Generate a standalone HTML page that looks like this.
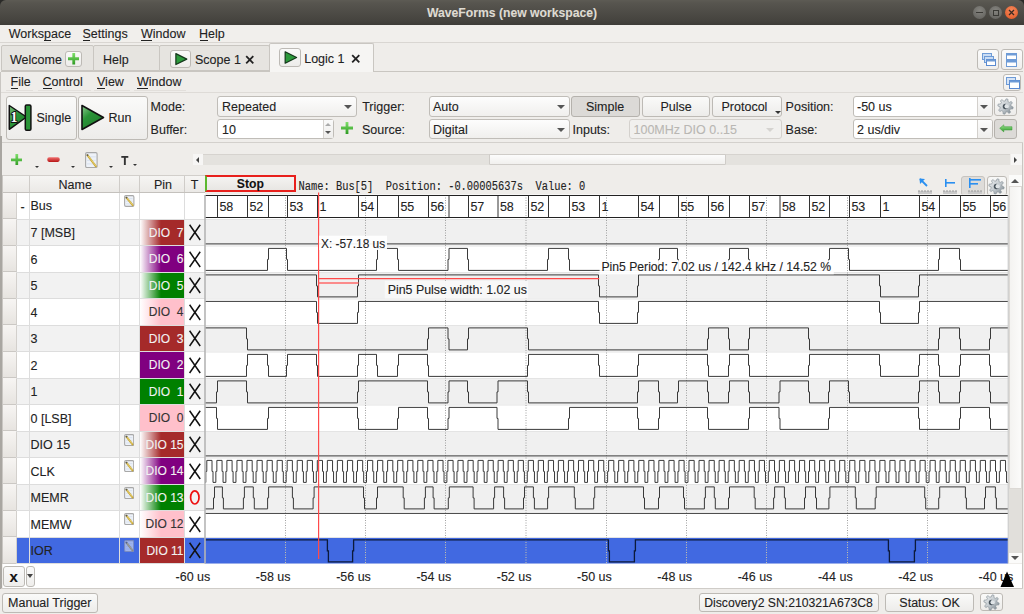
<!DOCTYPE html>
<html><head><meta charset="utf-8">
<style>
*{box-sizing:border-box;margin:0;padding:0}
html,body{width:1024px;height:614px;overflow:hidden;background:#efedea;font-family:"Liberation Sans",sans-serif;font-size:12.5px;color:#222}
.a{position:absolute}
.t{position:absolute;white-space:nowrap;line-height:1;-webkit-text-stroke:0.1px currentColor}
.wb{position:absolute;top:6px;width:13px;height:13px;border-radius:50%}
.btn{position:absolute;border:1px solid #bdbab5;border-radius:3px;background:linear-gradient(#fafaf9,#edecea)}
.prs{position:absolute;border:1px solid #b5b2ad;border-radius:3px;background:#dcdad7}
.combo{position:absolute;border:1px solid #c0bdb8;border-radius:3px;background:linear-gradient(#fdfdfd,#f0efed)}
.edit{position:absolute;border:1px solid #c0bdb8;border-radius:3px;background:#fff}
.arr{position:absolute;width:0;height:0;border-left:4px solid transparent;border-right:4px solid transparent;border-top:4px solid #555}
.u{position:absolute;height:1px;background:#222}
.mono{font-family:"Liberation Mono",monospace}
</style></head><body>

<div class="a" style="left:0;top:0;width:1024px;height:10px;background:#2a2a28"></div>
<div class="a" style="left:0;top:0;width:1024px;height:25px;background:linear-gradient(#5d5b54 0px,#57554f 3px,#46443f 20px,#3e3c38 25px);border-radius:6px 6px 0 0"></div>
<div class="t" style="left:0;width:1024px;text-align:center;top:7px;color:#dfdbd2;font-weight:bold;font-size:12.2px">WaveForms (new workspace)</div>
<div class="wb" style="left:973px;background:radial-gradient(circle at 50% 35%,#85847f,#5f5e5a)"><div class="a" style="left:3px;top:6px;width:7px;height:1px;background:#3a3935"></div></div>
<div class="wb" style="left:989px;background:radial-gradient(circle at 50% 35%,#85847f,#5f5e5a)"><div class="a" style="left:3.5px;top:3.5px;width:6px;height:6px;border:1px solid #3a3935"></div></div>
<div class="wb" style="left:1005px;background:radial-gradient(circle at 50% 35%,#f58a5e,#df5420)"><svg class="a" style="left:0;top:0" width="13" height="13"><path d="M4,4 L9,9 M9,4 L4,9" stroke="#3d2b22" stroke-width="1.3"/></svg></div>
<div class="a" style="left:0;top:25px;width:1024px;height:18px;background:#f1efec;border-bottom:1px solid #d9d6d2"></div>
<div class="t" style="left:8.8px;top:28.2px;">Workspace</div>
<div class="u" style="left:44.0px;top:40.1px;width:7px"></div>
<div class="t" style="left:82.5px;top:28.2px;">Settings</div>
<div class="u" style="left:82.5px;top:40.1px;width:7.5px"></div>
<div class="t" style="left:141px;top:28.2px;">Window</div>
<div class="u" style="left:141px;top:40.1px;width:11px"></div>
<div class="t" style="left:199px;top:28.2px;">Help</div>
<div class="u" style="left:199.5px;top:40.1px;width:8px"></div>
<div class="a" style="left:0;top:43px;width:1024px;height:29px;background:#efedea"></div>
<div class="a" style="left:1px;top:71px;width:1022px;height:1px;background:#c9c6c1"></div>
<div class="a" style="left:1px;top:44.8px;width:93px;height:26.200000000000003px;background:#e6e4e0;border:1px solid #c9c6c1;border-bottom:1px solid #c9c6c1;border-radius:2px 2px 0 0"></div>
<div class="a" style="left:93px;top:44.8px;width:67px;height:26.200000000000003px;background:#e6e4e0;border:1px solid #c9c6c1;border-bottom:1px solid #c9c6c1;border-radius:2px 2px 0 0"></div>
<div class="a" style="left:159px;top:44.8px;width:111px;height:26.200000000000003px;background:#e6e4e0;border:1px solid #c9c6c1;border-bottom:1px solid #c9c6c1;border-radius:2px 2px 0 0"></div>
<div class="a" style="left:269px;top:43px;width:105px;height:29px;background:#f6f5f3;border:1px solid #c9c6c1;border-bottom:none;border-radius:2px 2px 0 0"></div>
<div class="a" style="left:270px;top:71px;width:103px;height:2px;background:#f6f5f3"></div>
<div class="t" style="left:10px;top:53.6px;">Welcome</div>
<div class="btn" style="left:65px;top:50.5px;width:16.5px;height:16.5px"></div>
<svg class="a" style="left:67.5px;top:53px" width="11.5" height="11.5"><defs><linearGradient id="pg67" x1="0" y1="0" x2="0" y2="1"><stop offset="0" stop-color="#7fe06a"/><stop offset="1" stop-color="#2e9a22"/></linearGradient></defs><path d="M4.35,0 h2.8 v4.35 h4.35 v2.8 h-4.35 v4.35 h-2.8 v-4.35 h-4.35 v-2.8 h4.35 z" fill="url(#pg67)"/></svg>
<div class="t" style="left:103px;top:53.6px;">Help</div>
<div class="btn" style="left:169.5px;top:49.8px;width:21px;height:18.2px"></div>
<svg class="a" style="left:169.5px;top:49.8px" width="21" height="18.2"><polygon points="5.880000000000001,3.64 5.880000000000001,14.56 16.8,9.1" fill="#2c9a3c" stroke="#13361a" stroke-width="1.2" stroke-linejoin="round"/></svg>
<div class="t" style="left:195px;top:54px;">Scope 1</div>
<svg class="a" style="left:245px;top:55px" width="9.5" height="9.5"><path d="M1.2,1.2 L8.3,8.3 M8.3,1.2 L1.2,8.3" stroke="#222" stroke-width="1.8" stroke-linecap="butt"/></svg>
<div class="btn" style="left:278.6px;top:48.3px;width:22px;height:19px"></div>
<svg class="a" style="left:278.6px;top:48.3px" width="22" height="19"><polygon points="6.16,3.8000000000000003 6.16,15.200000000000001 17.6,9.5" fill="#2c9a3c" stroke="#13361a" stroke-width="1.2" stroke-linejoin="round"/></svg>
<div class="t" style="left:304.2px;top:53.4px;">Logic 1</div>
<svg class="a" style="left:350.5px;top:54px" width="9.5" height="9.5"><path d="M1.2,1.2 L8.3,8.3 M8.3,1.2 L1.2,8.3" stroke="#222" stroke-width="1.8" stroke-linecap="butt"/></svg>
<div class="btn" style="left:976.6px;top:48.5px;width:22.4px;height:21.5px;background:linear-gradient(#fbfbfb,#f0efed)"></div>
<svg class="a" style="left:976.6px;top:48.5px" width="22.4" height="21.5"><rect x="5.5" y="4.5" width="9" height="6" fill="#c9dcf4" stroke="#6e9bd6"/><rect x="7.5" y="7.5" width="9" height="6" fill="#c9dcf4" stroke="#6e9bd6"/><rect x="9.5" y="10.5" width="9" height="6" fill="#fff" stroke="#5a8ad0"/><rect x="9.5" y="10.5" width="9" height="2" fill="#6e9bd6"/></svg>
<div class="btn" style="left:1001px;top:48.5px;width:21.7px;height:21.5px;background:linear-gradient(#fbfbfb,#f0efed)"></div>
<svg class="a" style="left:1001px;top:48.5px" width="21.7" height="21.5"><rect x="5.5" y="4.5" width="10" height="6" fill="#fff" stroke="#6e9bd6"/><rect x="5.5" y="4.5" width="10" height="2" fill="#6e9bd6"/><rect x="5.5" y="11.5" width="10" height="6" fill="#fff" stroke="#6e9bd6"/><rect x="5.5" y="11.5" width="10" height="2" fill="#6e9bd6"/></svg>
<div class="a" style="left:1px;top:72px;width:1022px;height:20px;background:#efedea"></div>
<div class="t" style="left:10.5px;top:76.4px;">File</div>
<div class="u" style="left:10.5px;top:88.30000000000001px;width:7.5px"></div>
<div class="t" style="left:42.5px;top:76.4px;">Control</div>
<div class="u" style="left:42.5px;top:88.30000000000001px;width:9px"></div>
<div class="t" style="left:97px;top:76.4px;">View</div>
<div class="u" style="left:97px;top:88.30000000000001px;width:8px"></div>
<div class="t" style="left:137px;top:76.4px;">Window</div>
<div class="u" style="left:137px;top:88.30000000000001px;width:11px"></div>
<div class="a" style="left:6px;top:90px;width:27px;height:1px;background:#e2dfdb"></div>
<div class="a" style="left:38px;top:90px;width:53px;height:1px;background:#e2dfdb"></div>
<div class="a" style="left:94px;top:90px;width:36px;height:1px;background:#e2dfdb"></div>
<div class="a" style="left:134px;top:90px;width:52px;height:1px;background:#e2dfdb"></div>
<div class="btn" style="left:1002.7px;top:73.6px;width:18.7px;height:17.3px;background:linear-gradient(#fbfbfb,#f0efed)"></div>
<svg class="a" style="left:1002.7px;top:73.6px" width="18.7" height="17.3"><rect x="3.5" y="3.5" width="9" height="7" fill="#d6e4f6" stroke="#6e9bd6"/><rect x="6.5" y="6.5" width="10" height="8" fill="#fff" stroke="#5a8ad0"/><rect x="6.5" y="6.5" width="10" height="2" fill="#6e9bd6"/></svg>
<div class="a" style="left:1px;top:91.5px;width:1022px;height:1px;background:#dedbd7"></div>
<div class="btn" style="left:6px;top:96px;width:71px;height:43.5px"></div>
<svg class="a" style="left:0;top:90px" width="40" height="50"><defs><linearGradient id="sg" x1="0" y1="0" x2="1" y2="1"><stop offset="0" stop-color="#7cc07f"/><stop offset="0.45" stop-color="#2a9438"/><stop offset="1" stop-color="#1f7a2c"/></linearGradient></defs><polygon points="9.3,15.5 9.3,39.3 26.5,27" fill="url(#sg)" stroke="#111" stroke-width="1.5" stroke-linejoin="round"/><rect x="25.3" y="15" width="5.6" height="25.3" rx="1.3" fill="#2a9438" stroke="#111" stroke-width="1.5"/><text x="10.6" y="32.3" font-family="Liberation Serif" font-weight="bold" font-size="14" fill="#fff" stroke="#111" stroke-width="1.8" paint-order="stroke">1</text></svg>
<div class="t" style="left:36.5px;top:111.5px;">Single</div>
<div class="btn" style="left:78px;top:96px;width:70px;height:43.5px"></div>
<svg class="a" style="left:80px;top:104px" width="26" height="28"><defs><linearGradient id="rg" x1="0" y1="0" x2="0.8" y2="1"><stop offset="0" stop-color="#8ccc8e"/><stop offset="0.4" stop-color="#2a9438"/><stop offset="1" stop-color="#1f7a2c"/></linearGradient></defs><polygon points="2,1.5 2,25.5 23.5,13.5" fill="url(#rg)" stroke="#111" stroke-width="1.6" stroke-linejoin="round"/></svg>
<div class="t" style="left:108.5px;top:111.5px;">Run</div>
<div class="t" style="left:150.6px;top:100.5px;">Mode:</div>
<div class="t" style="left:150.6px;top:124px;">Buffer:</div>
<div class="combo" style="left:217px;top:96px;width:139.5px;height:21px"></div>
<div class="t" style="left:222px;top:100.5px;">Repeated</div>
<div class="arr" style="left:344px;top:104.5px"></div>
<div class="edit" style="left:217px;top:119px;width:116.5px;height:20px"></div>
<div class="a" style="left:322.5px;top:120px;width:10px;height:18px;border-left:1px solid #d6d3cf;background:linear-gradient(#fafafa,#eeedeb)"></div>
<div class="a" style="left:325px;top:123px;width:0;height:0;border-left:3px solid transparent;border-right:3px solid transparent;border-bottom:3.5px solid #aaa"></div>
<div class="a" style="left:325px;top:130.5px;width:0;height:0;border-left:3px solid transparent;border-right:3px solid transparent;border-top:3.5px solid #555"></div>
<div class="t" style="left:222px;top:124px;">10</div>
<svg class="a" style="left:341px;top:122.3px" width="12" height="12"><defs><linearGradient id="pg341" x1="0" y1="0" x2="0" y2="1"><stop offset="0" stop-color="#7fe06a"/><stop offset="1" stop-color="#2e9a22"/></linearGradient></defs><path d="M4.6,0 h2.8 v4.6 h4.6 v2.8 h-4.6 v4.6 h-2.8 v-4.6 h-4.6 v-2.8 h4.6 z" fill="url(#pg341)"/></svg>
<div class="t" style="left:362.2px;top:100.5px;">Trigger:</div>
<div class="t" style="left:362px;top:124px;">Source:</div>
<div class="combo" style="left:429px;top:96px;width:140.5px;height:21px"></div>
<div class="t" style="left:433px;top:100.5px;">Auto</div>
<div class="arr" style="left:557px;top:104.5px"></div>
<div class="combo" style="left:429px;top:119px;width:140.5px;height:20px"></div>
<div class="t" style="left:433px;top:124px;">Digital</div>
<div class="arr" style="left:557px;top:127.5px"></div>
<div class="prs" style="left:571px;top:96px;width:68.8px;height:21px"></div>
<div class="t" style="left:586px;top:100.5px;">Simple</div>
<div class="btn" style="left:641.5px;top:96px;width:68.8px;height:21px"></div>
<div class="t" style="left:660.5px;top:100.5px;">Pulse</div>
<div class="btn" style="left:712px;top:96px;width:69.5px;height:21px"></div>
<div class="t" style="left:721.5px;top:100.5px;">Protocol</div>
<div class="a" style="left:775px;top:111px;width:0;height:0;border-left:3px solid transparent;border-right:3px solid transparent;border-top:3px solid #333"></div>
<div class="t" style="left:572.5px;top:124px;">Inputs:</div>
<div class="combo" style="left:628.5px;top:119px;width:153.5px;height:20px;background:#f1f0ee;border-color:#d4d1cd"></div>
<div class="t" style="left:633.5px;top:124px;color:#b9b7b3">100MHz DIO 0..15</div>
<div class="arr" style="left:766px;top:127.5px;border-top-color:#d5d3d0"></div>
<div class="t" style="left:785.6px;top:100.5px;">Position:</div>
<div class="t" style="left:785.6px;top:124px;">Base:</div>
<div class="edit" style="left:852.5px;top:96px;width:140px;height:21px"></div>
<div class="a" style="left:976.5px;top:97px;width:15px;height:19px;border-left:1px solid #d3d0cc;border-radius:0 2px 2px 0;background:linear-gradient(#fcfcfc,#efeeec)"></div>
<div class="arr" style="left:980px;top:105px"></div>
<div class="t" style="left:857px;top:100.5px;">-50 us</div>
<div class="edit" style="left:852.5px;top:119px;width:140px;height:20px"></div>
<div class="a" style="left:976.5px;top:120px;width:15px;height:18px;border-left:1px solid #d3d0cc;border-radius:0 2px 2px 0;background:linear-gradient(#fcfcfc,#efeeec)"></div>
<div class="arr" style="left:980px;top:128px"></div>
<div class="t" style="left:857px;top:124px;">2 us/div</div>
<div class="btn" style="left:994.3px;top:96px;width:23.2px;height:20.2px"></div>
<svg class="a" style="left:997.2px;top:97.6px" width="17" height="17"><defs><linearGradient id="gg99797" x1="0" y1="0" x2="1" y2="1"><stop offset="0" stop-color="#f2f4f5"/><stop offset="0.55" stop-color="#bfc6cb"/><stop offset="1" stop-color="#6f7a82"/></linearGradient></defs><polygon points="14.11,8.30 16.13,9.01 15.73,11.00 13.59,10.87 12.61,12.32 13.54,14.26 11.84,15.38 10.42,13.77 8.70,14.11 7.99,16.13 6.00,15.73 6.13,13.59 4.68,12.61 2.74,13.54 1.62,11.84 3.23,10.42 2.89,8.70 0.87,7.99 1.27,6.00 3.41,6.13 4.39,4.68 3.46,2.74 5.16,1.62 6.58,3.23 8.30,2.89 9.01,0.87 11.00,1.27 10.87,3.41 12.32,4.39 14.26,3.46 15.38,5.16 13.77,6.58" fill="url(#gg99797)" stroke="#8a949b" stroke-width="0.7" stroke-linejoin="round"/><circle cx="8.5" cy="8.5" r="2.72" fill="#47525b"/><circle cx="9.69" cy="8.33" r="2.21" fill="#dfe4e7"/></svg>
<div class="prs" style="left:994.3px;top:118.5px;width:23.2px;height:20.8px"></div>
<svg class="a" style="left:999px;top:124px" width="14" height="10"><defs><linearGradient id="ag" x1="0" y1="0" x2="0" y2="1"><stop offset="0" stop-color="#9be58f"/><stop offset="1" stop-color="#2f9a2c"/></linearGradient></defs><path d="M0.7,4.3 L4.8,0.8 L4.8,2.7 L13,2.7 L13,6 L4.8,6 L4.8,7.9 Z" fill="url(#ag)" stroke="#3a9a36" stroke-width="0.5"/></svg>
<div class="a" style="left:1px;top:142px;width:1022px;height:1px;background:#d3d0cc"></div>
<div class="a" style="left:0;top:72px;width:1px;height:71px;background:#c9c6c2"></div>
<div class="a" style="left:0;top:136px;width:1.5px;height:453px;background:#a9a6a1"></div>
<div class="a" style="left:1022px;top:143px;width:1px;height:446px;background:#c9c6c1"></div>
<svg class="a" style="left:10.6px;top:153.6px" width="11.6" height="11.6"><defs><linearGradient id="pg10" x1="0" y1="0" x2="0" y2="1"><stop offset="0" stop-color="#7fe06a"/><stop offset="1" stop-color="#2e9a22"/></linearGradient></defs><path d="M4.449999999999999,0 h2.7 v4.449999999999999 h4.449999999999999 v2.7 h-4.449999999999999 v4.449999999999999 h-2.7 v-4.449999999999999 h-4.449999999999999 v-2.7 h4.449999999999999 z" fill="url(#pg10)"/></svg>
<div class="a" style="left:34.7px;top:165.6px;width:0;height:0;border-left:2.7px solid transparent;border-right:2.7px solid transparent;border-top:2.7px solid #333"></div>
<svg class="a" style="left:46.5px;top:157px" width="13" height="5.5"><defs><linearGradient id="mg" x1="0" y1="0" x2="0" y2="1"><stop offset="0" stop-color="#f07070"/><stop offset="1" stop-color="#b81616"/></linearGradient></defs><rect x="0.3" y="0.3" width="12.4" height="4.6" rx="1.8" fill="url(#mg)"/></svg>
<div class="a" style="left:71.4px;top:165.6px;width:0;height:0;border-left:2.7px solid transparent;border-right:2.7px solid transparent;border-top:2.7px solid #333"></div>
<svg class="a" style="left:85px;top:152.2px;opacity:1.0" width="12.7" height="16.1"><rect x="0.6" y="0.6" width="11.5" height="14.900000000000002" rx="1.3" fill="#eef2f8" stroke="#a8a8a8" stroke-width="1.1"/><line x1="2" y1="4.83" x2="10.7" y2="4.83" stroke="#cbd6ea" stroke-width="0.6"/><line x1="2" y1="8.372000000000002" x2="10.7" y2="8.372000000000002" stroke="#cbd6ea" stroke-width="0.6"/><line x1="2" y1="11.914000000000001" x2="10.7" y2="11.914000000000001" stroke="#cbd6ea" stroke-width="0.6"/><line x1="2.4" y1="3.14" x2="10.899999999999999" y2="14.3" stroke="#c9a83a" stroke-width="1.9" stroke-linecap="round"/><line x1="2.4" y1="2.74" x2="10.799999999999999" y2="13.900000000000002" stroke="#ecd77a" stroke-width="0.8"/><circle cx="2.5" cy="3.04" r="0.9" fill="#555"/></svg>
<div class="a" style="left:108.5px;top:165.6px;width:0;height:0;border-left:2.7px solid transparent;border-right:2.7px solid transparent;border-top:2.7px solid #333"></div>
<svg class="a" style="left:121px;top:156px" width="8" height="10"><rect x="0.3" y="0" width="7" height="1.8" fill="#333"/><rect x="2.9" y="0" width="1.9" height="9" fill="#333"/></svg>
<div class="a" style="left:133.2px;top:164.3px;width:0;height:0;border-left:2.7px solid transparent;border-right:2.7px solid transparent;border-top:2.7px solid #333"></div>
<div class="a" style="left:192.5px;top:154.4px;width:11px;height:11px;background:#f7f6f5"></div>
<div class="a" style="left:196px;top:157px;width:0;height:0;border-top:3px solid transparent;border-bottom:3px solid transparent;border-right:3.5px solid #444"></div>
<div class="a" style="left:203.4px;top:154.4px;width:807px;height:11px;background:#e4e2de;border-top:1px solid #d6d3cf"></div>
<div class="a" style="left:488.7px;top:154.4px;width:237.5px;height:11px;background:linear-gradient(#fcfcfc,#f1f0ee);border:1px solid #cfccc8;border-radius:1px"></div>
<div class="a" style="left:1010.5px;top:154.4px;width:11px;height:11px;background:#f7f6f5"></div>
<div class="a" style="left:1014px;top:157px;width:0;height:0;border-top:3px solid transparent;border-bottom:3px solid transparent;border-left:3.5px solid #444"></div>
<div class="a" style="left:3px;top:175px;width:202px;height:18px;background:linear-gradient(#f6f5f3,#ebe9e6);border-top:1px solid #d2cfcb;border-bottom:1px solid #c4c1bd"></div>
<div class="a" style="left:28.8px;top:176px;width:1px;height:16px;background:#cfccc8"></div>
<div class="a" style="left:118.8px;top:176px;width:1px;height:16px;background:#cfccc8"></div>
<div class="a" style="left:139.0px;top:176px;width:1px;height:16px;background:#cfccc8"></div>
<div class="a" style="left:183.9px;top:176px;width:1px;height:16px;background:#cfccc8"></div>
<div class="t" style="left:58.6px;top:178.8px">Name</div>
<div class="t" style="left:154px;top:178.8px">Pin</div>
<div class="t" style="left:190.8px;top:178.8px">T</div>
<div class="a" style="left:205px;top:175px;width:803px;height:20.5px;background:#efedea"></div>
<div class="a" style="left:205px;top:175.3px;width:90.6px;height:16.6px;border:2px solid #e8201c;border-left-color:#5cb82e;background:linear-gradient(#f4f3f1,#e8e6e3)"></div>
<div class="t" style="left:205px;width:90.6px;text-align:center;top:178.2px;font-weight:bold;font-size:12.2px;color:#111">Stop</div>
<div class="t mono" style="left:298.5px;top:179.9px;font-size:10.4px;color:#222;white-space:pre;transform:scaleY(1.28);transform-origin:0 0">Name: Bus[5]  Position: -0.00005637s  Value: 0</div>
<svg class="a" style="left:917px;top:176px" width="16" height="20"><rect x="1" y="15" width="14" height="3" fill="#c9c9c9"/><rect x="1.5" y="14" width="1" height="2" fill="#9a9a9a"/><rect x="4.5" y="14" width="1" height="2" fill="#9a9a9a"/><rect x="7.5" y="14" width="1" height="2" fill="#9a9a9a"/><rect x="10.5" y="14" width="1" height="2" fill="#9a9a9a"/><rect x="13.5" y="14" width="1" height="2" fill="#9a9a9a"/><path d="M3,3 L10,10" stroke="#2a8ff0" stroke-width="1.8"/><path d="M2.5,2.5 L8,3 L3,8 Z" fill="#2a8ff0"/></svg>
<svg class="a" style="left:942px;top:176px" width="16" height="20"><rect x="1" y="15" width="14" height="3" fill="#c9c9c9"/><rect x="1.5" y="14" width="1" height="2" fill="#9a9a9a"/><rect x="4.5" y="14" width="1" height="2" fill="#9a9a9a"/><rect x="7.5" y="14" width="1" height="2" fill="#9a9a9a"/><rect x="10.5" y="14" width="1" height="2" fill="#9a9a9a"/><rect x="13.5" y="14" width="1" height="2" fill="#9a9a9a"/><rect x="3" y="3" width="1.6" height="8" fill="#2a8ff0"/><rect x="3" y="6" width="10" height="1.6" fill="#2a8ff0"/></svg>
<div class="prs" style="left:961.4px;top:176px;width:23.6px;height:20px;border-color:#c6c3bf;background:#dedcd9"></div>
<svg class="a" style="left:966.9px;top:176px" width="16" height="20"><rect x="1" y="15" width="14" height="3" fill="#c9c9c9"/><rect x="1.5" y="14" width="1" height="2" fill="#9a9a9a"/><rect x="4.5" y="14" width="1" height="2" fill="#9a9a9a"/><rect x="7.5" y="14" width="1" height="2" fill="#9a9a9a"/><rect x="10.5" y="14" width="1" height="2" fill="#9a9a9a"/><rect x="13.5" y="14" width="1" height="2" fill="#9a9a9a"/><rect x="2" y="2" width="1.6" height="10" fill="#2a8ff0"/><rect x="2" y="3" width="12" height="1.6" fill="#2a8ff0"/><rect x="2" y="7" width="9" height="1.6" fill="#2a8ff0"/></svg>
<div class="btn" style="left:986.7px;top:176px;width:20.6px;height:20px;background:linear-gradient(#f8f8f7,#efeeec)"></div>
<svg class="a" style="left:988px;top:177.5px" width="17" height="17"><defs><linearGradient id="gg988177" x1="0" y1="0" x2="1" y2="1"><stop offset="0" stop-color="#f2f4f5"/><stop offset="0.55" stop-color="#bfc6cb"/><stop offset="1" stop-color="#6f7a82"/></linearGradient></defs><polygon points="14.11,8.30 16.13,9.01 15.73,11.00 13.59,10.87 12.61,12.32 13.54,14.26 11.84,15.38 10.42,13.77 8.70,14.11 7.99,16.13 6.00,15.73 6.13,13.59 4.68,12.61 2.74,13.54 1.62,11.84 3.23,10.42 2.89,8.70 0.87,7.99 1.27,6.00 3.41,6.13 4.39,4.68 3.46,2.74 5.16,1.62 6.58,3.23 8.30,2.89 9.01,0.87 11.00,1.27 10.87,3.41 12.32,4.39 14.26,3.46 15.38,5.16 13.77,6.58" fill="url(#gg988177)" stroke="#8a949b" stroke-width="0.7" stroke-linejoin="round"/><circle cx="8.5" cy="8.5" r="2.72" fill="#47525b"/><circle cx="9.69" cy="8.33" r="2.21" fill="#dfe4e7"/></svg>
<div class="a" style="left:1008.5px;top:175.4px;width:13.5px;height:388px;background:#eae8e5"></div>
<div class="a" style="left:1009px;top:175.4px;width:12.5px;height:10.7px;background:#fbfbfa"></div>
<div class="a" style="left:1011px;top:179px;width:0;height:0;border-left:4px solid transparent;border-right:4px solid transparent;border-bottom:4px solid #555"></div>
<div class="a" style="left:1009px;top:186px;width:12.5px;height:303px;background:linear-gradient(90deg,#f4f3f1,#fbfbfa);border:1px solid #dcd9d5"></div>
<div class="a" style="left:1009px;top:489px;width:12.5px;height:64.4px;background:#e1dfdb"></div>
<div class="a" style="left:1009px;top:553.4px;width:12.5px;height:10px;background:#fbfbfa"></div>
<div class="a" style="left:1011px;top:556px;width:0;height:0;border-left:4px solid transparent;border-right:4px solid transparent;border-top:4px solid #555"></div>
<div class="a" style="left:3px;top:193px;width:202px;height:370.5px;background:#fff"></div>
<div class="a" style="left:3px;top:193px;width:14px;height:26px;background:linear-gradient(#f7f5f3,#e7e4e0);border-right:1px solid #d3d0cc;border-bottom:1px solid #cbc8c4"></div>
<div class="t" style="left:20.5px;top:200.5px">-</div>
<div class="t" style="left:30.5px;top:200px">Bus</div>
<svg class="a" style="left:124px;top:194.5px;opacity:1.0" width="10.5" height="12"><rect x="0.6" y="0.6" width="9.3" height="10.8" rx="1.3" fill="#eef2f8" stroke="#a8a8a8" stroke-width="1.1"/><line x1="2" y1="3.5999999999999996" x2="8.5" y2="3.5999999999999996" stroke="#cbd6ea" stroke-width="0.6"/><line x1="2" y1="6.24" x2="8.5" y2="6.24" stroke="#cbd6ea" stroke-width="0.6"/><line x1="2" y1="8.879999999999999" x2="8.5" y2="8.879999999999999" stroke="#cbd6ea" stroke-width="0.6"/><line x1="2.4" y1="2.7" x2="8.7" y2="10.2" stroke="#c9a83a" stroke-width="1.9" stroke-linecap="round"/><line x1="2.4" y1="2.3000000000000003" x2="8.6" y2="9.8" stroke="#ecd77a" stroke-width="0.8"/><circle cx="2.5" cy="2.6" r="0.9" fill="#555"/></svg>
<div class="a" style="left:16.3px;top:219.0px;width:188.7px;height:26.5px;background:#f2f2f2"></div>
<div class="a" style="left:3px;top:219.0px;width:14px;height:26.5px;background:linear-gradient(#f7f5f3,#e7e4e0);border-right:1px solid #d3d0cc;border-bottom:1px solid #cbc8c4"></div>
<div class="a" style="left:140px;top:219.5px;width:44.4px;height:25.7px;background:linear-gradient(90deg,#ffffff 0px,#a52a2a 21px,#a52a2a 44px)"></div>
<div class="t" style="left:120px;width:63.5px;text-align:right;top:226.6px;color:#f2f2f2;font-size:12px">DIO&nbsp;&nbsp;7</div>
<div class="t" style="left:30.5px;top:227.0px;color:#222">7 [MSB]</div>
<svg class="a" style="left:188px;top:224.0px" width="14" height="17"><path d="M1.6,0.8 L12.2,16 M12.2,0.8 L1.6,16" stroke="#111" stroke-width="1.5"/></svg>
<div class="a" style="left:16.3px;top:245.5px;width:188.7px;height:26.5px;background:#ffffff"></div>
<div class="a" style="left:3px;top:245.5px;width:14px;height:26.5px;background:linear-gradient(#f7f5f3,#e7e4e0);border-right:1px solid #d3d0cc;border-bottom:1px solid #cbc8c4"></div>
<div class="a" style="left:140px;top:246.0px;width:44.4px;height:25.7px;background:linear-gradient(90deg,#ffffff 0px,#800080 21px,#800080 44px)"></div>
<div class="t" style="left:120px;width:63.5px;text-align:right;top:253.1px;color:#f2f2f2;font-size:12px">DIO&nbsp;&nbsp;6</div>
<div class="t" style="left:30.5px;top:253.5px;color:#222">6</div>
<svg class="a" style="left:188px;top:250.5px" width="14" height="17"><path d="M1.6,0.8 L12.2,16 M12.2,0.8 L1.6,16" stroke="#111" stroke-width="1.5"/></svg>
<div class="a" style="left:16.3px;top:272.0px;width:188.7px;height:26.5px;background:#f2f2f2"></div>
<div class="a" style="left:3px;top:272.0px;width:14px;height:26.5px;background:linear-gradient(#f7f5f3,#e7e4e0);border-right:1px solid #d3d0cc;border-bottom:1px solid #cbc8c4"></div>
<div class="a" style="left:140px;top:272.5px;width:44.4px;height:25.7px;background:linear-gradient(90deg,#ffffff 0px,#008000 21px,#008000 44px)"></div>
<div class="t" style="left:120px;width:63.5px;text-align:right;top:279.6px;color:#f2f2f2;font-size:12px">DIO&nbsp;&nbsp;5</div>
<div class="t" style="left:30.5px;top:280.0px;color:#222">5</div>
<svg class="a" style="left:188px;top:277.0px" width="14" height="17"><path d="M1.6,0.8 L12.2,16 M12.2,0.8 L1.6,16" stroke="#111" stroke-width="1.5"/></svg>
<div class="a" style="left:16.3px;top:298.5px;width:188.7px;height:26.5px;background:#ffffff"></div>
<div class="a" style="left:3px;top:298.5px;width:14px;height:26.5px;background:linear-gradient(#f7f5f3,#e7e4e0);border-right:1px solid #d3d0cc;border-bottom:1px solid #cbc8c4"></div>
<div class="a" style="left:140px;top:299.0px;width:44.4px;height:25.7px;background:linear-gradient(90deg,#ffffff 0px,#ffc0cb 21px,#ffc0cb 44px)"></div>
<div class="t" style="left:120px;width:63.5px;text-align:right;top:306.1px;color:#333;font-size:12px">DIO&nbsp;&nbsp;4</div>
<div class="t" style="left:30.5px;top:306.5px;color:#222">4</div>
<svg class="a" style="left:188px;top:303.5px" width="14" height="17"><path d="M1.6,0.8 L12.2,16 M12.2,0.8 L1.6,16" stroke="#111" stroke-width="1.5"/></svg>
<div class="a" style="left:16.3px;top:325.0px;width:188.7px;height:26.5px;background:#f2f2f2"></div>
<div class="a" style="left:3px;top:325.0px;width:14px;height:26.5px;background:linear-gradient(#f7f5f3,#e7e4e0);border-right:1px solid #d3d0cc;border-bottom:1px solid #cbc8c4"></div>
<div class="a" style="left:140px;top:325.5px;width:44.4px;height:25.7px;background:#a52a2a"></div>
<div class="t" style="left:120px;width:63.5px;text-align:right;top:332.6px;color:#f2f2f2;font-size:12px">DIO&nbsp;&nbsp;3</div>
<div class="t" style="left:30.5px;top:333.0px;color:#222">3</div>
<svg class="a" style="left:188px;top:330.0px" width="14" height="17"><path d="M1.6,0.8 L12.2,16 M12.2,0.8 L1.6,16" stroke="#111" stroke-width="1.5"/></svg>
<div class="a" style="left:16.3px;top:351.5px;width:188.7px;height:26.5px;background:#ffffff"></div>
<div class="a" style="left:3px;top:351.5px;width:14px;height:26.5px;background:linear-gradient(#f7f5f3,#e7e4e0);border-right:1px solid #d3d0cc;border-bottom:1px solid #cbc8c4"></div>
<div class="a" style="left:140px;top:352.0px;width:44.4px;height:25.7px;background:#800080"></div>
<div class="t" style="left:120px;width:63.5px;text-align:right;top:359.1px;color:#f2f2f2;font-size:12px">DIO&nbsp;&nbsp;2</div>
<div class="t" style="left:30.5px;top:359.5px;color:#222">2</div>
<svg class="a" style="left:188px;top:356.5px" width="14" height="17"><path d="M1.6,0.8 L12.2,16 M12.2,0.8 L1.6,16" stroke="#111" stroke-width="1.5"/></svg>
<div class="a" style="left:16.3px;top:378.0px;width:188.7px;height:26.5px;background:#f2f2f2"></div>
<div class="a" style="left:3px;top:378.0px;width:14px;height:26.5px;background:linear-gradient(#f7f5f3,#e7e4e0);border-right:1px solid #d3d0cc;border-bottom:1px solid #cbc8c4"></div>
<div class="a" style="left:140px;top:378.5px;width:44.4px;height:25.7px;background:#008000"></div>
<div class="t" style="left:120px;width:63.5px;text-align:right;top:385.6px;color:#f2f2f2;font-size:12px">DIO&nbsp;&nbsp;1</div>
<div class="t" style="left:30.5px;top:386.0px;color:#222">1</div>
<svg class="a" style="left:188px;top:383.0px" width="14" height="17"><path d="M1.6,0.8 L12.2,16 M12.2,0.8 L1.6,16" stroke="#111" stroke-width="1.5"/></svg>
<div class="a" style="left:16.3px;top:404.5px;width:188.7px;height:26.5px;background:#ffffff"></div>
<div class="a" style="left:3px;top:404.5px;width:14px;height:26.5px;background:linear-gradient(#f7f5f3,#e7e4e0);border-right:1px solid #d3d0cc;border-bottom:1px solid #cbc8c4"></div>
<div class="a" style="left:140px;top:405.0px;width:44.4px;height:25.7px;background:#ffc0cb"></div>
<div class="t" style="left:120px;width:63.5px;text-align:right;top:412.1px;color:#333;font-size:12px">DIO&nbsp;&nbsp;0</div>
<div class="t" style="left:30.5px;top:412.5px;color:#222">0 [LSB]</div>
<svg class="a" style="left:188px;top:409.5px" width="14" height="17"><path d="M1.6,0.8 L12.2,16 M12.2,0.8 L1.6,16" stroke="#111" stroke-width="1.5"/></svg>
<div class="a" style="left:16.3px;top:431.0px;width:188.7px;height:26.5px;background:#f2f2f2"></div>
<div class="a" style="left:3px;top:431.0px;width:14px;height:26.5px;background:linear-gradient(#f7f5f3,#e7e4e0);border-right:1px solid #d3d0cc;border-bottom:1px solid #cbc8c4"></div>
<div class="a" style="left:140px;top:431.5px;width:44.4px;height:25.7px;background:linear-gradient(90deg,#ffffff 0px,#a52a2a 21px,#a52a2a 44px)"></div>
<div class="t" style="left:120px;width:63.5px;text-align:right;top:438.6px;color:#f2f2f2;font-size:12px">DIO 15</div>
<div class="t" style="left:30.5px;top:439.0px;color:#222">DIO 15</div>
<svg class="a" style="left:124.2px;top:433.8px;opacity:1.0" width="10.3" height="12.2"><rect x="0.6" y="0.6" width="9.100000000000001" height="11.0" rx="1.3" fill="#eef2f8" stroke="#a8a8a8" stroke-width="1.1"/><line x1="2" y1="3.6599999999999997" x2="8.3" y2="3.6599999999999997" stroke="#cbd6ea" stroke-width="0.6"/><line x1="2" y1="6.343999999999999" x2="8.3" y2="6.343999999999999" stroke="#cbd6ea" stroke-width="0.6"/><line x1="2" y1="9.027999999999999" x2="8.3" y2="9.027999999999999" stroke="#cbd6ea" stroke-width="0.6"/><line x1="2.4" y1="2.66" x2="8.5" y2="10.399999999999999" stroke="#c9a83a" stroke-width="1.9" stroke-linecap="round"/><line x1="2.4" y1="2.2600000000000002" x2="8.4" y2="10.0" stroke="#ecd77a" stroke-width="0.8"/><circle cx="2.5" cy="2.56" r="0.9" fill="#555"/></svg>
<svg class="a" style="left:188px;top:436.0px" width="14" height="17"><path d="M1.6,0.8 L12.2,16 M12.2,0.8 L1.6,16" stroke="#111" stroke-width="1.5"/></svg>
<div class="a" style="left:16.3px;top:457.5px;width:188.7px;height:26.5px;background:#ffffff"></div>
<div class="a" style="left:3px;top:457.5px;width:14px;height:26.5px;background:linear-gradient(#f7f5f3,#e7e4e0);border-right:1px solid #d3d0cc;border-bottom:1px solid #cbc8c4"></div>
<div class="a" style="left:140px;top:458.0px;width:44.4px;height:25.7px;background:linear-gradient(90deg,#ffffff 0px,#800080 21px,#800080 44px)"></div>
<div class="t" style="left:120px;width:63.5px;text-align:right;top:465.1px;color:#f2f2f2;font-size:12px">DIO 14</div>
<div class="t" style="left:30.5px;top:465.5px;color:#222">CLK</div>
<svg class="a" style="left:124.2px;top:460.3px;opacity:1.0" width="10.3" height="12.2"><rect x="0.6" y="0.6" width="9.100000000000001" height="11.0" rx="1.3" fill="#eef2f8" stroke="#a8a8a8" stroke-width="1.1"/><line x1="2" y1="3.6599999999999997" x2="8.3" y2="3.6599999999999997" stroke="#cbd6ea" stroke-width="0.6"/><line x1="2" y1="6.343999999999999" x2="8.3" y2="6.343999999999999" stroke="#cbd6ea" stroke-width="0.6"/><line x1="2" y1="9.027999999999999" x2="8.3" y2="9.027999999999999" stroke="#cbd6ea" stroke-width="0.6"/><line x1="2.4" y1="2.66" x2="8.5" y2="10.399999999999999" stroke="#c9a83a" stroke-width="1.9" stroke-linecap="round"/><line x1="2.4" y1="2.2600000000000002" x2="8.4" y2="10.0" stroke="#ecd77a" stroke-width="0.8"/><circle cx="2.5" cy="2.56" r="0.9" fill="#555"/></svg>
<svg class="a" style="left:188px;top:462.5px" width="14" height="17"><path d="M1.6,0.8 L12.2,16 M12.2,0.8 L1.6,16" stroke="#111" stroke-width="1.5"/></svg>
<div class="a" style="left:16.3px;top:484.0px;width:188.7px;height:26.5px;background:#f2f2f2"></div>
<div class="a" style="left:3px;top:484.0px;width:14px;height:26.5px;background:linear-gradient(#f7f5f3,#e7e4e0);border-right:1px solid #d3d0cc;border-bottom:1px solid #cbc8c4"></div>
<div class="a" style="left:140px;top:484.5px;width:44.4px;height:25.7px;background:linear-gradient(90deg,#ffffff 0px,#008000 21px,#008000 44px)"></div>
<div class="t" style="left:120px;width:63.5px;text-align:right;top:491.6px;color:#f2f2f2;font-size:12px">DIO 13</div>
<div class="t" style="left:30.5px;top:492.0px;color:#222">MEMR</div>
<svg class="a" style="left:124.2px;top:486.8px;opacity:1.0" width="10.3" height="12.2"><rect x="0.6" y="0.6" width="9.100000000000001" height="11.0" rx="1.3" fill="#eef2f8" stroke="#a8a8a8" stroke-width="1.1"/><line x1="2" y1="3.6599999999999997" x2="8.3" y2="3.6599999999999997" stroke="#cbd6ea" stroke-width="0.6"/><line x1="2" y1="6.343999999999999" x2="8.3" y2="6.343999999999999" stroke="#cbd6ea" stroke-width="0.6"/><line x1="2" y1="9.027999999999999" x2="8.3" y2="9.027999999999999" stroke="#cbd6ea" stroke-width="0.6"/><line x1="2.4" y1="2.66" x2="8.5" y2="10.399999999999999" stroke="#c9a83a" stroke-width="1.9" stroke-linecap="round"/><line x1="2.4" y1="2.2600000000000002" x2="8.4" y2="10.0" stroke="#ecd77a" stroke-width="0.8"/><circle cx="2.5" cy="2.56" r="0.9" fill="#555"/></svg>
<svg class="a" style="left:189px;top:489.0px" width="12" height="17"><ellipse cx="5.8" cy="8.4" rx="4.2" ry="6.6" fill="none" stroke="#ee1111" stroke-width="1.7"/></svg>
<div class="a" style="left:16.3px;top:510.5px;width:188.7px;height:26.5px;background:#ffffff"></div>
<div class="a" style="left:3px;top:510.5px;width:14px;height:26.5px;background:linear-gradient(#f7f5f3,#e7e4e0);border-right:1px solid #d3d0cc;border-bottom:1px solid #cbc8c4"></div>
<div class="a" style="left:140px;top:511.0px;width:44.4px;height:25.7px;background:linear-gradient(90deg,#ffffff 0px,#ffc0cb 21px,#ffc0cb 44px)"></div>
<div class="t" style="left:120px;width:63.5px;text-align:right;top:518.1px;color:#333;font-size:12px">DIO 12</div>
<div class="t" style="left:30.5px;top:518.5px;color:#222">MEMW</div>
<svg class="a" style="left:124.2px;top:513.3px;opacity:1.0" width="10.3" height="12.2"><rect x="0.6" y="0.6" width="9.100000000000001" height="11.0" rx="1.3" fill="#eef2f8" stroke="#a8a8a8" stroke-width="1.1"/><line x1="2" y1="3.6599999999999997" x2="8.3" y2="3.6599999999999997" stroke="#cbd6ea" stroke-width="0.6"/><line x1="2" y1="6.343999999999999" x2="8.3" y2="6.343999999999999" stroke="#cbd6ea" stroke-width="0.6"/><line x1="2" y1="9.027999999999999" x2="8.3" y2="9.027999999999999" stroke="#cbd6ea" stroke-width="0.6"/><line x1="2.4" y1="2.66" x2="8.5" y2="10.399999999999999" stroke="#c9a83a" stroke-width="1.9" stroke-linecap="round"/><line x1="2.4" y1="2.2600000000000002" x2="8.4" y2="10.0" stroke="#ecd77a" stroke-width="0.8"/><circle cx="2.5" cy="2.56" r="0.9" fill="#555"/></svg>
<svg class="a" style="left:188px;top:515.5px" width="14" height="17"><path d="M1.6,0.8 L12.2,16 M12.2,0.8 L1.6,16" stroke="#111" stroke-width="1.5"/></svg>
<div class="a" style="left:16.3px;top:537.0px;width:188.7px;height:26.5px;background:#4169e1"></div>
<div class="a" style="left:3px;top:537.0px;width:14px;height:26.5px;background:linear-gradient(#f7f5f3,#e7e4e0);border-right:1px solid #d3d0cc;border-bottom:1px solid #cbc8c4"></div>
<div class="a" style="left:140px;top:537.5px;width:44.4px;height:25.7px;background:#a52a2a"></div>
<div class="t" style="left:120px;width:63.5px;text-align:right;top:544.6px;color:#f2f2f2;font-size:12px">DIO 11</div>
<div class="t" style="left:30.5px;top:545.0px;color:#222">IOR</div>
<svg class="a" style="left:124.2px;top:539.8px;opacity:0.55" width="10.3" height="12.2"><rect x="0.6" y="0.6" width="9.100000000000001" height="11.0" rx="1.3" fill="#eef2f8" stroke="#a8a8a8" stroke-width="1.1"/><line x1="2" y1="3.6599999999999997" x2="8.3" y2="3.6599999999999997" stroke="#cbd6ea" stroke-width="0.6"/><line x1="2" y1="6.343999999999999" x2="8.3" y2="6.343999999999999" stroke="#cbd6ea" stroke-width="0.6"/><line x1="2" y1="9.027999999999999" x2="8.3" y2="9.027999999999999" stroke="#cbd6ea" stroke-width="0.6"/><line x1="2.4" y1="2.66" x2="8.5" y2="10.399999999999999" stroke="#c9a83a" stroke-width="1.9" stroke-linecap="round"/><line x1="2.4" y1="2.2600000000000002" x2="8.4" y2="10.0" stroke="#ecd77a" stroke-width="0.8"/><circle cx="2.5" cy="2.56" r="0.9" fill="#555"/></svg>
<svg class="a" style="left:188px;top:542.0px" width="14" height="17"><path d="M1.6,0.8 L12.2,16 M12.2,0.8 L1.6,16" stroke="#111" stroke-width="1.5"/></svg>
<div class="a" style="left:16.3px;top:218.5px;width:188.7px;height:1px;background:#dddddd"></div>
<div class="a" style="left:16.3px;top:245.0px;width:188.7px;height:1px;background:#dddddd"></div>
<div class="a" style="left:16.3px;top:271.5px;width:188.7px;height:1px;background:#dddddd"></div>
<div class="a" style="left:16.3px;top:298.0px;width:188.7px;height:1px;background:#dddddd"></div>
<div class="a" style="left:16.3px;top:324.5px;width:188.7px;height:1px;background:#dddddd"></div>
<div class="a" style="left:16.3px;top:351.0px;width:188.7px;height:1px;background:#dddddd"></div>
<div class="a" style="left:16.3px;top:377.5px;width:188.7px;height:1px;background:#dddddd"></div>
<div class="a" style="left:16.3px;top:404.0px;width:188.7px;height:1px;background:#dddddd"></div>
<div class="a" style="left:16.3px;top:430.5px;width:188.7px;height:1px;background:#dddddd"></div>
<div class="a" style="left:16.3px;top:457.0px;width:188.7px;height:1px;background:#dddddd"></div>
<div class="a" style="left:16.3px;top:483.5px;width:188.7px;height:1px;background:#dddddd"></div>
<div class="a" style="left:16.3px;top:510.0px;width:188.7px;height:1px;background:#dddddd"></div>
<div class="a" style="left:16.3px;top:536.5px;width:188.7px;height:1px;background:#dddddd"></div>
<div class="a" style="left:16.3px;top:563.0px;width:188.7px;height:1px;background:#dddddd"></div>
<div class="a" style="left:28.8px;top:193px;width:1px;height:370.5px;background:#dddddd"></div>
<div class="a" style="left:118.8px;top:193px;width:1px;height:370.5px;background:#dddddd"></div>
<div class="a" style="left:139.0px;top:193px;width:1px;height:370.5px;background:#dddddd"></div>
<div class="a" style="left:183.9px;top:193px;width:1px;height:370.5px;background:#dddddd"></div>
<div class="a" style="left:2.3px;top:175px;width:1px;height:389px;background:#c9c6c2"></div>
<svg class="a" style="left:0;top:0" width="1024" height="614"><rect x="205.0" y="195.5" width="803.0" height="368" fill="#ffffff"/><rect x="205.0" y="219.0" width="803.0" height="26.5" fill="#f0f0f0"/><rect x="205.0" y="272.0" width="803.0" height="26.5" fill="#f0f0f0"/><rect x="205.0" y="325.0" width="803.0" height="26.5" fill="#f0f0f0"/><rect x="205.0" y="378.0" width="803.0" height="26.5" fill="#f0f0f0"/><rect x="205.0" y="431.0" width="803.0" height="26.5" fill="#f0f0f0"/><rect x="205.0" y="484.0" width="803.0" height="26.5" fill="#f0f0f0"/><rect x="205.0" y="537.0" width="803.0" height="26.5" fill="#4169e1"/><rect x="205.0" y="194.5" width="803.0" height="24" fill="#ffffff"/><line x1="205.0" y1="219.5" x2="1008.0" y2="219.5" stroke="#e4e4e4" stroke-width="1"/><line x1="205.0" y1="246.0" x2="1008.0" y2="246.0" stroke="#e4e4e4" stroke-width="1"/><line x1="205.0" y1="272.5" x2="1008.0" y2="272.5" stroke="#e4e4e4" stroke-width="1"/><line x1="205.0" y1="299.0" x2="1008.0" y2="299.0" stroke="#e4e4e4" stroke-width="1"/><line x1="205.0" y1="325.5" x2="1008.0" y2="325.5" stroke="#e4e4e4" stroke-width="1"/><line x1="205.0" y1="352.0" x2="1008.0" y2="352.0" stroke="#e4e4e4" stroke-width="1"/><line x1="205.0" y1="378.5" x2="1008.0" y2="378.5" stroke="#e4e4e4" stroke-width="1"/><line x1="205.0" y1="405.0" x2="1008.0" y2="405.0" stroke="#e4e4e4" stroke-width="1"/><line x1="205.0" y1="431.5" x2="1008.0" y2="431.5" stroke="#e4e4e4" stroke-width="1"/><line x1="205.0" y1="458.0" x2="1008.0" y2="458.0" stroke="#e4e4e4" stroke-width="1"/><line x1="205.0" y1="484.5" x2="1008.0" y2="484.5" stroke="#e4e4e4" stroke-width="1"/><line x1="205.0" y1="511.0" x2="1008.0" y2="511.0" stroke="#e4e4e4" stroke-width="1"/><line x1="205.0" y1="537.5" x2="1008.0" y2="537.5" stroke="#e4e4e4" stroke-width="1"/><line x1="285.5" y1="195" x2="285.5" y2="537" stroke="#a0a0a0" stroke-width="1" stroke-dasharray="1,1.5"/><line x1="285.5" y1="537" x2="285.5" y2="563.5" stroke="#c9c4a8" stroke-width="1" stroke-dasharray="1,1.5"/><line x1="365.5" y1="195" x2="365.5" y2="537" stroke="#a0a0a0" stroke-width="1" stroke-dasharray="1,1.5"/><line x1="365.5" y1="537" x2="365.5" y2="563.5" stroke="#c9c4a8" stroke-width="1" stroke-dasharray="1,1.5"/><line x1="445.5" y1="195" x2="445.5" y2="537" stroke="#a0a0a0" stroke-width="1" stroke-dasharray="1,1.5"/><line x1="445.5" y1="537" x2="445.5" y2="563.5" stroke="#c9c4a8" stroke-width="1" stroke-dasharray="1,1.5"/><line x1="526" y1="195" x2="526" y2="537" stroke="#a0a0a0" stroke-width="1" stroke-dasharray="1,1.5"/><line x1="526" y1="537" x2="526" y2="563.5" stroke="#c9c4a8" stroke-width="1" stroke-dasharray="1,1.5"/><line x1="606.5" y1="195" x2="606.5" y2="537" stroke="#a0a0a0" stroke-width="1" stroke-dasharray="1,1.5"/><line x1="606.5" y1="537" x2="606.5" y2="563.5" stroke="#c9c4a8" stroke-width="1" stroke-dasharray="1,1.5"/><line x1="686.5" y1="195" x2="686.5" y2="537" stroke="#a0a0a0" stroke-width="1" stroke-dasharray="1,1.5"/><line x1="686.5" y1="537" x2="686.5" y2="563.5" stroke="#c9c4a8" stroke-width="1" stroke-dasharray="1,1.5"/><line x1="766.5" y1="195" x2="766.5" y2="537" stroke="#a0a0a0" stroke-width="1" stroke-dasharray="1,1.5"/><line x1="766.5" y1="537" x2="766.5" y2="563.5" stroke="#c9c4a8" stroke-width="1" stroke-dasharray="1,1.5"/><line x1="847.5" y1="195" x2="847.5" y2="537" stroke="#a0a0a0" stroke-width="1" stroke-dasharray="1,1.5"/><line x1="847.5" y1="537" x2="847.5" y2="563.5" stroke="#c9c4a8" stroke-width="1" stroke-dasharray="1,1.5"/><line x1="927.5" y1="195" x2="927.5" y2="537" stroke="#a0a0a0" stroke-width="1" stroke-dasharray="1,1.5"/><line x1="927.5" y1="537" x2="927.5" y2="563.5" stroke="#c9c4a8" stroke-width="1" stroke-dasharray="1,1.5"/><line x1="205.0" y1="195.5" x2="1008.0" y2="195.5" stroke="#222" stroke-width="1"/><line x1="205.0" y1="217.5" x2="1008.0" y2="217.5" stroke="#222" stroke-width="1"/><line x1="217.5" y1="195.5" x2="217.5" y2="217.5" stroke="#333" stroke-width="1"/><line x1="247.5" y1="195.5" x2="247.5" y2="217.5" stroke="#333" stroke-width="1"/><line x1="268.5" y1="195.5" x2="268.5" y2="217.5" stroke="#333" stroke-width="1"/><line x1="287.5" y1="195.5" x2="287.5" y2="217.5" stroke="#333" stroke-width="1"/><line x1="317.5" y1="195.5" x2="317.5" y2="217.5" stroke="#333" stroke-width="1"/><line x1="358.5" y1="195.5" x2="358.5" y2="217.5" stroke="#333" stroke-width="1"/><line x1="377.5" y1="195.5" x2="377.5" y2="217.5" stroke="#333" stroke-width="1"/><line x1="398.5" y1="195.5" x2="398.5" y2="217.5" stroke="#333" stroke-width="1"/><line x1="428.5" y1="195.5" x2="428.5" y2="217.5" stroke="#333" stroke-width="1"/><line x1="449.0" y1="195.5" x2="449.0" y2="217.5" stroke="#333" stroke-width="1"/><line x1="468.5" y1="195.5" x2="468.5" y2="217.5" stroke="#333" stroke-width="1"/><line x1="498.0" y1="195.5" x2="498.0" y2="217.5" stroke="#333" stroke-width="1"/><line x1="528.5" y1="195.5" x2="528.5" y2="217.5" stroke="#333" stroke-width="1"/><line x1="548.5" y1="195.5" x2="548.5" y2="217.5" stroke="#333" stroke-width="1"/><line x1="569.5" y1="195.5" x2="569.5" y2="217.5" stroke="#333" stroke-width="1"/><line x1="599.5" y1="195.5" x2="599.5" y2="217.5" stroke="#333" stroke-width="1"/><line x1="638.5" y1="195.5" x2="638.5" y2="217.5" stroke="#333" stroke-width="1"/><line x1="659.5" y1="195.5" x2="659.5" y2="217.5" stroke="#333" stroke-width="1"/><line x1="678.5" y1="195.5" x2="678.5" y2="217.5" stroke="#333" stroke-width="1"/><line x1="708.5" y1="195.5" x2="708.5" y2="217.5" stroke="#333" stroke-width="1"/><line x1="729.5" y1="195.5" x2="729.5" y2="217.5" stroke="#333" stroke-width="1"/><line x1="749.5" y1="195.5" x2="749.5" y2="217.5" stroke="#333" stroke-width="1"/><line x1="780.0" y1="195.5" x2="780.0" y2="217.5" stroke="#333" stroke-width="1"/><line x1="809.5" y1="195.5" x2="809.5" y2="217.5" stroke="#333" stroke-width="1"/><line x1="829.5" y1="195.5" x2="829.5" y2="217.5" stroke="#333" stroke-width="1"/><line x1="849.5" y1="195.5" x2="849.5" y2="217.5" stroke="#333" stroke-width="1"/><line x1="880.5" y1="195.5" x2="880.5" y2="217.5" stroke="#333" stroke-width="1"/><line x1="919.5" y1="195.5" x2="919.5" y2="217.5" stroke="#333" stroke-width="1"/><line x1="939.5" y1="195.5" x2="939.5" y2="217.5" stroke="#333" stroke-width="1"/><line x1="960.5" y1="195.5" x2="960.5" y2="217.5" stroke="#333" stroke-width="1"/><line x1="990.5" y1="195.5" x2="990.5" y2="217.5" stroke="#333" stroke-width="1"/><path d="M205.00,407.40 L216.50,407.40 L216.50,418.40 L217.50,418.40 L217.50,429.40 L267.50,429.40 L267.50,418.40 L268.50,418.40 L268.50,407.40 L357.50,407.40 L357.50,418.40 L358.50,418.40 L358.50,429.40 L397.50,429.40 L397.50,418.40 L398.50,418.40 L398.50,407.40 L427.50,407.40 L427.50,418.40 L428.50,418.40 L428.50,429.40 L448.00,429.40 L448.00,418.40 L449.00,418.40 L449.00,407.40 L497.00,407.40 L497.00,418.40 L498.00,418.40 L498.00,429.40 L568.50,429.40 L568.50,418.40 L569.50,418.40 L569.50,407.40 L637.50,407.40 L637.50,418.40 L638.50,418.40 L638.50,429.40 L658.50,429.40 L658.50,418.40 L659.50,418.40 L659.50,407.40 L707.50,407.40 L707.50,418.40 L708.50,418.40 L708.50,429.40 L748.50,429.40 L748.50,418.40 L749.50,418.40 L749.50,407.40 L779.00,407.40 L779.00,418.40 L780.00,418.40 L780.00,429.40 L828.50,429.40 L828.50,418.40 L829.50,418.40 L829.50,407.40 L918.50,407.40 L918.50,418.40 L919.50,418.40 L919.50,429.40 L959.50,429.40 L959.50,418.40 L960.50,418.40 L960.50,407.40 L989.50,407.40 L989.50,418.40 L990.50,418.40 L990.50,429.40 L1008.00,429.40" fill="none" stroke="#3a3a3a" stroke-width="1.0"/><path d="M205.00,402.90 L216.50,402.90 L216.50,391.90 L217.50,391.90 L217.50,380.90 L246.50,380.90 L246.50,391.90 L247.50,391.90 L247.50,402.90 L357.50,402.90 L357.50,391.90 L358.50,391.90 L358.50,380.90 L427.50,380.90 L427.50,391.90 L428.50,391.90 L428.50,402.90 L448.00,402.90 L448.00,391.90 L449.00,391.90 L449.00,380.90 L467.50,380.90 L467.50,391.90 L468.50,391.90 L468.50,402.90 L497.00,402.90 L497.00,391.90 L498.00,391.90 L498.00,380.90 L527.50,380.90 L527.50,391.90 L528.50,391.90 L528.50,402.90 L637.50,402.90 L637.50,391.90 L638.50,391.90 L638.50,380.90 L658.50,380.90 L658.50,391.90 L659.50,391.90 L659.50,402.90 L677.50,402.90 L677.50,391.90 L678.50,391.90 L678.50,380.90 L707.50,380.90 L707.50,391.90 L708.50,391.90 L708.50,402.90 L728.50,402.90 L728.50,391.90 L729.50,391.90 L729.50,380.90 L748.50,380.90 L748.50,391.90 L749.50,391.90 L749.50,402.90 L779.00,402.90 L779.00,391.90 L780.00,391.90 L780.00,380.90 L808.50,380.90 L808.50,391.90 L809.50,391.90 L809.50,402.90 L828.50,402.90 L828.50,391.90 L829.50,391.90 L829.50,380.90 L848.50,380.90 L848.50,391.90 L849.50,391.90 L849.50,402.90 L918.50,402.90 L918.50,391.90 L919.50,391.90 L919.50,380.90 L938.50,380.90 L938.50,391.90 L939.50,391.90 L939.50,402.90 L959.50,402.90 L959.50,391.90 L960.50,391.90 L960.50,380.90 L989.50,380.90 L989.50,391.90 L990.50,391.90 L990.50,402.90 L1008.00,402.90" fill="none" stroke="#3a3a3a" stroke-width="1.0"/><path d="M205.00,376.40 L246.50,376.40 L246.50,365.40 L247.50,365.40 L247.50,354.40 L267.50,354.40 L267.50,365.40 L268.50,365.40 L268.50,376.40 L286.50,376.40 L286.50,365.40 L287.50,365.40 L287.50,354.40 L316.50,354.40 L316.50,365.40 L317.50,365.40 L317.50,376.40 L357.50,376.40 L357.50,365.40 L358.50,365.40 L358.50,354.40 L376.50,354.40 L376.50,365.40 L377.50,365.40 L377.50,376.40 L397.50,376.40 L397.50,365.40 L398.50,365.40 L398.50,354.40 L427.50,354.40 L427.50,365.40 L428.50,365.40 L428.50,376.40 L527.50,376.40 L527.50,365.40 L528.50,365.40 L528.50,354.40 L598.50,354.40 L598.50,365.40 L599.50,365.40 L599.50,376.40 L637.50,376.40 L637.50,365.40 L638.50,365.40 L638.50,354.40 L707.50,354.40 L707.50,365.40 L708.50,365.40 L708.50,376.40 L728.50,376.40 L728.50,365.40 L729.50,365.40 L729.50,354.40 L748.50,354.40 L748.50,365.40 L749.50,365.40 L749.50,376.40 L808.50,376.40 L808.50,365.40 L809.50,365.40 L809.50,354.40 L879.50,354.40 L879.50,365.40 L880.50,365.40 L880.50,376.40 L918.50,376.40 L918.50,365.40 L919.50,365.40 L919.50,354.40 L938.50,354.40 L938.50,365.40 L939.50,365.40 L939.50,376.40 L959.50,376.40 L959.50,365.40 L960.50,365.40 L960.50,354.40 L989.50,354.40 L989.50,365.40 L990.50,365.40 L990.50,376.40 L1008.00,376.40" fill="none" stroke="#3a3a3a" stroke-width="1.0"/><path d="M205.00,327.90 L246.50,327.90 L246.50,338.90 L247.50,338.90 L247.50,349.90 L427.50,349.90 L427.50,338.90 L428.50,338.90 L428.50,327.90 L448.00,327.90 L448.00,338.90 L449.00,338.90 L449.00,349.90 L467.50,349.90 L467.50,338.90 L468.50,338.90 L468.50,327.90 L527.50,327.90 L527.50,338.90 L528.50,338.90 L528.50,349.90 L707.50,349.90 L707.50,338.90 L708.50,338.90 L708.50,327.90 L728.50,327.90 L728.50,338.90 L729.50,338.90 L729.50,349.90 L748.50,349.90 L748.50,338.90 L749.50,338.90 L749.50,327.90 L808.50,327.90 L808.50,338.90 L809.50,338.90 L809.50,349.90 L938.50,349.90 L938.50,338.90 L939.50,338.90 L939.50,327.90 L959.50,327.90 L959.50,338.90 L960.50,338.90 L960.50,349.90 L989.50,349.90 L989.50,338.90 L990.50,338.90 L990.50,327.90 L1008.00,327.90" fill="none" stroke="#3a3a3a" stroke-width="1.0"/><path d="M205.00,301.40 L316.50,301.40 L316.50,312.40 L317.50,312.40 L317.50,323.40 L357.50,323.40 L357.50,312.40 L358.50,312.40 L358.50,301.40 L598.50,301.40 L598.50,312.40 L599.50,312.40 L599.50,323.40 L637.50,323.40 L637.50,312.40 L638.50,312.40 L638.50,301.40 L879.50,301.40 L879.50,312.40 L880.50,312.40 L880.50,323.40 L918.50,323.40 L918.50,312.40 L919.50,312.40 L919.50,301.40 L1008.00,301.40" fill="none" stroke="#3a3a3a" stroke-width="1.0"/><path d="M205.00,274.90 L316.50,274.90 L316.50,285.90 L317.50,285.90 L317.50,296.90 L357.50,296.90 L357.50,285.90 L358.50,285.90 L358.50,274.90 L598.50,274.90 L598.50,285.90 L599.50,285.90 L599.50,296.90 L637.50,296.90 L637.50,285.90 L638.50,285.90 L638.50,274.90 L879.50,274.90 L879.50,285.90 L880.50,285.90 L880.50,296.90 L918.50,296.90 L918.50,285.90 L919.50,285.90 L919.50,274.90 L1008.00,274.90" fill="none" stroke="#3a3a3a" stroke-width="1.0"/><path d="M205.00,270.40 L267.50,270.40 L267.50,259.40 L268.50,259.40 L268.50,248.40 L286.50,248.40 L286.50,259.40 L287.50,259.40 L287.50,270.40 L376.50,270.40 L376.50,259.40 L377.50,259.40 L377.50,248.40 L397.50,248.40 L397.50,259.40 L398.50,259.40 L398.50,270.40 L448.00,270.40 L448.00,259.40 L449.00,259.40 L449.00,248.40 L467.50,248.40 L467.50,259.40 L468.50,259.40 L468.50,270.40 L547.50,270.40 L547.50,259.40 L548.50,259.40 L548.50,248.40 L568.50,248.40 L568.50,259.40 L569.50,259.40 L569.50,270.40 L658.50,270.40 L658.50,259.40 L659.50,259.40 L659.50,248.40 L677.50,248.40 L677.50,259.40 L678.50,259.40 L678.50,270.40 L728.50,270.40 L728.50,259.40 L729.50,259.40 L729.50,248.40 L748.50,248.40 L748.50,259.40 L749.50,259.40 L749.50,270.40 L828.50,270.40 L828.50,259.40 L829.50,259.40 L829.50,248.40 L848.50,248.40 L848.50,259.40 L849.50,259.40 L849.50,270.40 L938.50,270.40 L938.50,259.40 L939.50,259.40 L939.50,248.40 L959.50,248.40 L959.50,259.40 L960.50,259.40 L960.50,270.40 L1008.00,270.40" fill="none" stroke="#3a3a3a" stroke-width="1.0"/><path d="M205.00,243.90 L1008.00,243.90" fill="none" stroke="#3a3a3a" stroke-width="1.0"/><path d="M205.00,455.90 L1008.00,455.90" fill="none" stroke="#3a3a3a" stroke-width="1.0"/><path d="M205.00,482.40 L205.80,482.40 L205.80,471.40 L206.80,471.40 L206.80,460.40 L212.00,460.40 L212.00,471.40 L213.00,471.40 L213.00,482.40 L215.85,482.40 L215.85,471.40 L216.85,471.40 L216.85,460.40 L222.05,460.40 L222.05,471.40 L223.05,471.40 L223.05,482.40 L225.89,482.40 L225.89,471.40 L226.89,471.40 L226.89,460.40 L232.09,460.40 L232.09,471.40 L233.09,471.40 L233.09,482.40 L235.94,482.40 L235.94,471.40 L236.94,471.40 L236.94,460.40 L242.14,460.40 L242.14,471.40 L243.14,471.40 L243.14,482.40 L245.98,482.40 L245.98,471.40 L246.98,471.40 L246.98,460.40 L252.18,460.40 L252.18,471.40 L253.18,471.40 L253.18,482.40 L256.03,482.40 L256.03,471.40 L257.03,471.40 L257.03,460.40 L262.23,460.40 L262.23,471.40 L263.23,471.40 L263.23,482.40 L266.07,482.40 L266.07,471.40 L267.07,471.40 L267.07,460.40 L272.27,460.40 L272.27,471.40 L273.27,471.40 L273.27,482.40 L276.12,482.40 L276.12,471.40 L277.12,471.40 L277.12,460.40 L282.32,460.40 L282.32,471.40 L283.32,471.40 L283.32,482.40 L286.17,482.40 L286.17,471.40 L287.17,471.40 L287.17,460.40 L292.37,460.40 L292.37,471.40 L293.37,471.40 L293.37,482.40 L296.21,482.40 L296.21,471.40 L297.21,471.40 L297.21,460.40 L302.41,460.40 L302.41,471.40 L303.41,471.40 L303.41,482.40 L306.25,482.40 L306.25,471.40 L307.25,471.40 L307.25,460.40 L312.45,460.40 L312.45,471.40 L313.45,471.40 L313.45,482.40 L316.30,482.40 L316.30,471.40 L317.30,471.40 L317.30,460.40 L322.50,460.40 L322.50,471.40 L323.50,471.40 L323.50,482.40 L326.35,482.40 L326.35,471.40 L327.35,471.40 L327.35,460.40 L332.55,460.40 L332.55,471.40 L333.55,471.40 L333.55,482.40 L336.39,482.40 L336.39,471.40 L337.39,471.40 L337.39,460.40 L342.59,460.40 L342.59,471.40 L343.59,471.40 L343.59,482.40 L346.44,482.40 L346.44,471.40 L347.44,471.40 L347.44,460.40 L352.63,460.40 L352.63,471.40 L353.63,471.40 L353.63,482.40 L356.48,482.40 L356.48,471.40 L357.48,471.40 L357.48,460.40 L362.68,460.40 L362.68,471.40 L363.68,471.40 L363.68,482.40 L366.53,482.40 L366.53,471.40 L367.53,471.40 L367.53,460.40 L372.73,460.40 L372.73,471.40 L373.73,471.40 L373.73,482.40 L376.57,482.40 L376.57,471.40 L377.57,471.40 L377.57,460.40 L382.77,460.40 L382.77,471.40 L383.77,471.40 L383.77,482.40 L386.62,482.40 L386.62,471.40 L387.62,471.40 L387.62,460.40 L392.81,460.40 L392.81,471.40 L393.81,471.40 L393.81,482.40 L396.66,482.40 L396.66,471.40 L397.66,471.40 L397.66,460.40 L402.86,460.40 L402.86,471.40 L403.86,471.40 L403.86,482.40 L406.71,482.40 L406.71,471.40 L407.71,471.40 L407.71,460.40 L412.91,460.40 L412.91,471.40 L413.91,471.40 L413.91,482.40 L416.75,482.40 L416.75,471.40 L417.75,471.40 L417.75,460.40 L422.95,460.40 L422.95,471.40 L423.95,471.40 L423.95,482.40 L426.80,482.40 L426.80,471.40 L427.80,471.40 L427.80,460.40 L433.00,460.40 L433.00,471.40 L434.00,471.40 L434.00,482.40 L436.84,482.40 L436.84,471.40 L437.84,471.40 L437.84,460.40 L443.04,460.40 L443.04,471.40 L444.04,471.40 L444.04,482.40 L446.88,482.40 L446.88,471.40 L447.88,471.40 L447.88,460.40 L453.08,460.40 L453.08,471.40 L454.08,471.40 L454.08,482.40 L456.93,482.40 L456.93,471.40 L457.93,471.40 L457.93,460.40 L463.13,460.40 L463.13,471.40 L464.13,471.40 L464.13,482.40 L466.98,482.40 L466.98,471.40 L467.98,471.40 L467.98,460.40 L473.18,460.40 L473.18,471.40 L474.18,471.40 L474.18,482.40 L477.02,482.40 L477.02,471.40 L478.02,471.40 L478.02,460.40 L483.22,460.40 L483.22,471.40 L484.22,471.40 L484.22,482.40 L487.06,482.40 L487.06,471.40 L488.06,471.40 L488.06,460.40 L493.26,460.40 L493.26,471.40 L494.26,471.40 L494.26,482.40 L497.11,482.40 L497.11,471.40 L498.11,471.40 L498.11,460.40 L503.31,460.40 L503.31,471.40 L504.31,471.40 L504.31,482.40 L507.15,482.40 L507.15,471.40 L508.15,471.40 L508.15,460.40 L513.36,460.40 L513.36,471.40 L514.36,471.40 L514.36,482.40 L517.20,482.40 L517.20,471.40 L518.20,471.40 L518.20,460.40 L523.40,460.40 L523.40,471.40 L524.40,471.40 L524.40,482.40 L527.25,482.40 L527.25,471.40 L528.25,471.40 L528.25,460.40 L533.45,460.40 L533.45,471.40 L534.45,471.40 L534.45,482.40 L537.29,482.40 L537.29,471.40 L538.29,471.40 L538.29,460.40 L543.49,460.40 L543.49,471.40 L544.49,471.40 L544.49,482.40 L547.34,482.40 L547.34,471.40 L548.34,471.40 L548.34,460.40 L553.54,460.40 L553.54,471.40 L554.54,471.40 L554.54,482.40 L557.38,482.40 L557.38,471.40 L558.38,471.40 L558.38,460.40 L563.58,460.40 L563.58,471.40 L564.58,471.40 L564.58,482.40 L567.43,482.40 L567.43,471.40 L568.43,471.40 L568.43,460.40 L573.63,460.40 L573.63,471.40 L574.63,471.40 L574.63,482.40 L577.47,482.40 L577.47,471.40 L578.47,471.40 L578.47,460.40 L583.67,460.40 L583.67,471.40 L584.67,471.40 L584.67,482.40 L587.51,482.40 L587.51,471.40 L588.51,471.40 L588.51,460.40 L593.72,460.40 L593.72,471.40 L594.72,471.40 L594.72,482.40 L597.56,482.40 L597.56,471.40 L598.56,471.40 L598.56,460.40 L603.76,460.40 L603.76,471.40 L604.76,471.40 L604.76,482.40 L607.61,482.40 L607.61,471.40 L608.61,471.40 L608.61,460.40 L613.81,460.40 L613.81,471.40 L614.81,471.40 L614.81,482.40 L617.65,482.40 L617.65,471.40 L618.65,471.40 L618.65,460.40 L623.85,460.40 L623.85,471.40 L624.85,471.40 L624.85,482.40 L627.70,482.40 L627.70,471.40 L628.70,471.40 L628.70,460.40 L633.90,460.40 L633.90,471.40 L634.90,471.40 L634.90,482.40 L637.74,482.40 L637.74,471.40 L638.74,471.40 L638.74,460.40 L643.94,460.40 L643.94,471.40 L644.94,471.40 L644.94,482.40 L647.78,482.40 L647.78,471.40 L648.78,471.40 L648.78,460.40 L653.99,460.40 L653.99,471.40 L654.99,471.40 L654.99,482.40 L657.83,482.40 L657.83,471.40 L658.83,471.40 L658.83,460.40 L664.03,460.40 L664.03,471.40 L665.03,471.40 L665.03,482.40 L667.88,482.40 L667.88,471.40 L668.88,471.40 L668.88,460.40 L674.08,460.40 L674.08,471.40 L675.08,471.40 L675.08,482.40 L677.92,482.40 L677.92,471.40 L678.92,471.40 L678.92,460.40 L684.12,460.40 L684.12,471.40 L685.12,471.40 L685.12,482.40 L687.97,482.40 L687.97,471.40 L688.97,471.40 L688.97,460.40 L694.17,460.40 L694.17,471.40 L695.17,471.40 L695.17,482.40 L698.01,482.40 L698.01,471.40 L699.01,471.40 L699.01,460.40 L704.21,460.40 L704.21,471.40 L705.21,471.40 L705.21,482.40 L708.05,482.40 L708.05,471.40 L709.05,471.40 L709.05,460.40 L714.25,460.40 L714.25,471.40 L715.25,471.40 L715.25,482.40 L718.10,482.40 L718.10,471.40 L719.10,471.40 L719.10,460.40 L724.30,460.40 L724.30,471.40 L725.30,471.40 L725.30,482.40 L728.14,482.40 L728.14,471.40 L729.14,471.40 L729.14,460.40 L734.35,460.40 L734.35,471.40 L735.35,471.40 L735.35,482.40 L738.19,482.40 L738.19,471.40 L739.19,471.40 L739.19,460.40 L744.39,460.40 L744.39,471.40 L745.39,471.40 L745.39,482.40 L748.24,482.40 L748.24,471.40 L749.24,471.40 L749.24,460.40 L754.44,460.40 L754.44,471.40 L755.44,471.40 L755.44,482.40 L758.28,482.40 L758.28,471.40 L759.28,471.40 L759.28,460.40 L764.48,460.40 L764.48,471.40 L765.48,471.40 L765.48,482.40 L768.32,482.40 L768.32,471.40 L769.32,471.40 L769.32,460.40 L774.52,460.40 L774.52,471.40 L775.52,471.40 L775.52,482.40 L778.37,482.40 L778.37,471.40 L779.37,471.40 L779.37,460.40 L784.57,460.40 L784.57,471.40 L785.57,471.40 L785.57,482.40 L788.42,482.40 L788.42,471.40 L789.42,471.40 L789.42,460.40 L794.62,460.40 L794.62,471.40 L795.62,471.40 L795.62,482.40 L798.46,482.40 L798.46,471.40 L799.46,471.40 L799.46,460.40 L804.66,460.40 L804.66,471.40 L805.66,471.40 L805.66,482.40 L808.50,482.40 L808.50,471.40 L809.50,471.40 L809.50,460.40 L814.71,460.40 L814.71,471.40 L815.71,471.40 L815.71,482.40 L818.55,482.40 L818.55,471.40 L819.55,471.40 L819.55,460.40 L824.75,460.40 L824.75,471.40 L825.75,471.40 L825.75,482.40 L828.59,482.40 L828.59,471.40 L829.59,471.40 L829.59,460.40 L834.79,460.40 L834.79,471.40 L835.79,471.40 L835.79,482.40 L838.64,482.40 L838.64,471.40 L839.64,471.40 L839.64,460.40 L844.84,460.40 L844.84,471.40 L845.84,471.40 L845.84,482.40 L848.69,482.40 L848.69,471.40 L849.69,471.40 L849.69,460.40 L854.89,460.40 L854.89,471.40 L855.89,471.40 L855.89,482.40 L858.73,482.40 L858.73,471.40 L859.73,471.40 L859.73,460.40 L864.93,460.40 L864.93,471.40 L865.93,471.40 L865.93,482.40 L868.77,482.40 L868.77,471.40 L869.77,471.40 L869.77,460.40 L874.98,460.40 L874.98,471.40 L875.98,471.40 L875.98,482.40 L878.82,482.40 L878.82,471.40 L879.82,471.40 L879.82,460.40 L885.02,460.40 L885.02,471.40 L886.02,471.40 L886.02,482.40 L888.86,482.40 L888.86,471.40 L889.86,471.40 L889.86,460.40 L895.06,460.40 L895.06,471.40 L896.06,471.40 L896.06,482.40 L898.91,482.40 L898.91,471.40 L899.91,471.40 L899.91,460.40 L905.11,460.40 L905.11,471.40 L906.11,471.40 L906.11,482.40 L908.96,482.40 L908.96,471.40 L909.96,471.40 L909.96,460.40 L915.16,460.40 L915.16,471.40 L916.16,471.40 L916.16,482.40 L919.00,482.40 L919.00,471.40 L920.00,471.40 L920.00,460.40 L925.20,460.40 L925.20,471.40 L926.20,471.40 L926.20,482.40 L929.04,482.40 L929.04,471.40 L930.04,471.40 L930.04,460.40 L935.25,460.40 L935.25,471.40 L936.25,471.40 L936.25,482.40 L939.09,482.40 L939.09,471.40 L940.09,471.40 L940.09,460.40 L945.29,460.40 L945.29,471.40 L946.29,471.40 L946.29,482.40 L949.14,482.40 L949.14,471.40 L950.14,471.40 L950.14,460.40 L955.34,460.40 L955.34,471.40 L956.34,471.40 L956.34,482.40 L959.18,482.40 L959.18,471.40 L960.18,471.40 L960.18,460.40 L965.38,460.40 L965.38,471.40 L966.38,471.40 L966.38,482.40 L969.23,482.40 L969.23,471.40 L970.23,471.40 L970.23,460.40 L975.43,460.40 L975.43,471.40 L976.43,471.40 L976.43,482.40 L979.27,482.40 L979.27,471.40 L980.27,471.40 L980.27,460.40 L985.47,460.40 L985.47,471.40 L986.47,471.40 L986.47,482.40 L989.31,482.40 L989.31,471.40 L990.31,471.40 L990.31,460.40 L995.51,460.40 L995.51,471.40 L996.51,471.40 L996.51,482.40 L999.36,482.40 L999.36,471.40 L1000.36,471.40 L1000.36,460.40 L1005.56,460.40 L1005.56,471.40 L1006.56,471.40 L1006.56,482.40 L1008.00,482.40" fill="none" stroke="#3a3a3a" stroke-width="1.0"/><path d="M205.00,508.90 L213.50,508.90 L213.50,497.90 L214.50,497.90 L214.50,486.90 L222.40,486.90 L222.40,497.90 L223.40,497.90 L223.40,508.90 L243.40,508.90 L243.40,497.90 L244.40,497.90 L244.40,486.90 L253.30,486.90 L253.30,497.90 L254.30,497.90 L254.30,508.90 L267.60,508.90 L267.60,497.90 L268.60,497.90 L268.60,486.90 L292.40,486.90 L292.40,497.90 L293.40,497.90 L293.40,508.90 L313.10,508.90 L313.10,497.90 L314.10,497.90 L314.10,486.90 L363.50,486.90 L363.50,497.90 L364.50,497.90 L364.50,508.90 L376.50,508.90 L376.50,497.90 L377.50,497.90 L377.50,486.90 L403.20,486.90 L403.20,497.90 L404.20,497.90 L404.20,508.90 L424.40,508.90 L424.40,497.90 L425.40,497.90 L425.40,486.90 L433.10,486.90 L433.10,497.90 L434.10,497.90 L434.10,508.90 L448.30,508.90 L448.30,497.90 L449.30,497.90 L449.30,486.90 L473.10,486.90 L473.10,497.90 L474.10,497.90 L474.10,508.90 L493.60,508.90 L493.60,497.90 L494.60,497.90 L494.60,486.90 L503.60,486.90 L503.60,497.90 L504.60,497.90 L504.60,508.90 L523.50,508.90 L523.50,497.90 L524.50,497.90 L524.50,486.90 L533.40,486.90 L533.40,497.90 L534.40,497.90 L534.40,508.90 L547.60,508.90 L547.60,497.90 L548.60,497.90 L548.60,486.90 L574.30,486.90 L574.30,497.90 L575.30,497.90 L575.30,508.90 L593.70,508.90 L593.70,497.90 L594.70,497.90 L594.70,486.90 L643.50,486.90 L643.50,497.90 L644.50,497.90 L644.50,508.90 L658.50,508.90 L658.50,497.90 L659.50,497.90 L659.50,486.90 L683.50,486.90 L683.50,497.90 L684.50,497.90 L684.50,508.90 L704.40,508.90 L704.40,497.90 L705.40,497.90 L705.40,486.90 L714.30,486.90 L714.30,497.90 L715.30,497.90 L715.30,508.90 L728.50,508.90 L728.50,497.90 L729.50,497.90 L729.50,486.90 L754.20,486.90 L754.20,497.90 L755.20,497.90 L755.20,508.90 L773.60,508.90 L773.60,497.90 L774.60,497.90 L774.60,486.90 L784.40,486.90 L784.40,497.90 L785.40,497.90 L785.40,508.90 L804.50,508.90 L804.50,497.90 L805.50,497.90 L805.50,486.90 L815.50,486.90 L815.50,497.90 L816.50,497.90 L816.50,508.90 L828.90,508.90 L828.90,497.90 L829.90,497.90 L829.90,486.90 L855.30,486.90 L855.30,497.90 L856.30,497.90 L856.30,508.90 L875.20,508.90 L875.20,497.90 L876.20,497.90 L876.20,486.90 L924.70,486.90 L924.70,497.90 L925.70,497.90 L925.70,508.90 L938.70,508.90 L938.70,497.90 L939.70,497.90 L939.70,486.90 L965.40,486.90 L965.40,497.90 L966.40,497.90 L966.40,508.90 L984.50,508.90 L984.50,497.90 L985.50,497.90 L985.50,486.90 L995.40,486.90 L995.40,497.90 L996.40,497.90 L996.40,508.90 L1008.00,508.90" fill="none" stroke="#3a3a3a" stroke-width="1.0"/><path d="M205.00,513.40 L1008.00,513.40" fill="none" stroke="#3a3a3a" stroke-width="1.0"/><path d="M205.00,539.90 L327.40,539.90 L327.40,550.90 L328.40,550.90 L328.40,561.90 L352.60,561.90 L352.60,550.90 L353.60,550.90 L353.60,539.90 L608.40,539.90 L608.40,550.90 L609.40,550.90 L609.40,561.90 L634.40,561.90 L634.40,550.90 L635.40,550.90 L635.40,539.90 L888.40,539.90 L888.40,550.90 L889.40,550.90 L889.40,561.90 L914.40,561.90 L914.40,550.90 L915.40,550.90 L915.40,539.90 L1008.00,539.90" fill="none" stroke="#0c1a3a" stroke-width="1.3"/><line x1="318.6" y1="192.5" x2="318.6" y2="559" stroke="#ff4a4a" stroke-width="1.2"/><line x1="318.6" y1="278.6" x2="599.2" y2="278.6" stroke="#ff4a4a" stroke-width="1.2"/><line x1="318.6" y1="283" x2="358.6" y2="283" stroke="#ff6a6a" stroke-width="1.4"/><rect x="319.1" y="235.7" width="67.9" height="14.3" fill="#ffffff" fill-opacity="0.92"/><rect x="384.7" y="280.8" width="143.4" height="17.6" fill="#f8f8f8" fill-opacity="0.92"/><rect x="599.6" y="260.3" width="234.2" height="14" fill="#ffffff" fill-opacity="0.92"/><line x1="205" y1="195" x2="205" y2="563.5" stroke="#b5b5b5" stroke-width="1.6"/><line x1="1008.2" y1="195" x2="1008.2" y2="563.5" stroke="#c4c4c4" stroke-width="1"/></svg>
<div class="t" style="left:219.4px;top:200.7px;color:#222">58</div>
<div class="t" style="left:249.4px;top:200.7px;color:#222">52</div>
<div class="t" style="left:289.4px;top:200.7px;color:#222">53</div>
<div class="t" style="left:319.4px;top:200.7px;color:#222">1</div>
<div class="t" style="left:360.4px;top:200.7px;color:#222">54</div>
<div class="t" style="left:400.4px;top:200.7px;color:#222">55</div>
<div class="t" style="left:430.4px;top:200.7px;color:#222">56</div>
<div class="t" style="left:470.4px;top:200.7px;color:#222">57</div>
<div class="t" style="left:499.9px;top:200.7px;color:#222">58</div>
<div class="t" style="left:530.4px;top:200.7px;color:#222">52</div>
<div class="t" style="left:571.4px;top:200.7px;color:#222">53</div>
<div class="t" style="left:601.4px;top:200.7px;color:#222">1</div>
<div class="t" style="left:640.4px;top:200.7px;color:#222">54</div>
<div class="t" style="left:680.4px;top:200.7px;color:#222">55</div>
<div class="t" style="left:710.4px;top:200.7px;color:#222">56</div>
<div class="t" style="left:751.4px;top:200.7px;color:#222">57</div>
<div class="t" style="left:781.9px;top:200.7px;color:#222">58</div>
<div class="t" style="left:811.4px;top:200.7px;color:#222">52</div>
<div class="t" style="left:851.4px;top:200.7px;color:#222">53</div>
<div class="t" style="left:882.4px;top:200.7px;color:#222">1</div>
<div class="t" style="left:921.4px;top:200.7px;color:#222">54</div>
<div class="t" style="left:962.4px;top:200.7px;color:#222">55</div>
<div class="t" style="left:992.4px;top:200.7px;color:#222">56</div>
<div class="t" style="left:321px;top:239.3px;font-size:11.9px;color:#222">X: -57.18 us</div>
<div class="t" style="left:387.7px;top:283.9px;font-size:12.4px;color:#222">Pin5 Pulse width: 1.02 us</div>
<div class="t" style="left:601.4px;top:260.9px;font-size:12.2px;color:#222">Pin5 Period: 7.02 us / 142.4 kHz / 14.52 %</div>
<div class="a" style="left:3px;top:563.5px;width:1019px;height:24.5px;background:#fff"></div>
<div class="a" style="left:1px;top:588px;width:1022px;height:1px;background:#cfccc8"></div>
<div class="btn" style="left:2.6px;top:565.7px;width:22.4px;height:21px;background:linear-gradient(#fafafa,#efeeec)"></div>
<div class="t" style="left:9.6px;top:569px;font-weight:bold;font-size:15px;color:#111">x</div>
<div class="btn" style="left:25.7px;top:565.7px;width:9.6px;height:21px;background:linear-gradient(#fafafa,#efeeec)"></div>
<div class="a" style="left:26.6px;top:574px;width:0;height:0;border-left:3.7px solid transparent;border-right:3.7px solid transparent;border-top:4.2px solid #444"></div>
<div class="t" style="left:162.9px;width:60px;text-align:center;top:570.7px;color:#222">-60 us</div>
<div class="t" style="left:243.2px;width:60px;text-align:center;top:570.7px;color:#222">-58 us</div>
<div class="t" style="left:323.5px;width:60px;text-align:center;top:570.7px;color:#222">-56 us</div>
<div class="t" style="left:403.79999999999995px;width:60px;text-align:center;top:570.7px;color:#222">-54 us</div>
<div class="t" style="left:484.1px;width:60px;text-align:center;top:570.7px;color:#222">-52 us</div>
<div class="t" style="left:564.4px;width:60px;text-align:center;top:570.7px;color:#222">-50 us</div>
<div class="t" style="left:644.6999999999999px;width:60px;text-align:center;top:570.7px;color:#222">-48 us</div>
<div class="t" style="left:725.0px;width:60px;text-align:center;top:570.7px;color:#222">-46 us</div>
<div class="t" style="left:805.3px;width:60px;text-align:center;top:570.7px;color:#222">-44 us</div>
<div class="t" style="left:885.5999999999999px;width:60px;text-align:center;top:570.7px;color:#222">-42 us</div>
<div class="t" style="left:965.9px;width:60px;text-align:center;top:570.7px;color:#222">-40 us</div>
<svg class="a" style="left:1000px;top:571px" width="15" height="17"><polygon points="7,0.5 14,16 0.5,16" fill="#000"/></svg>
<div class="btn" style="left:2.2px;top:592.7px;width:95.9px;height:19.9px"></div>
<div class="t" style="left:8.1px;top:596.7px">Manual Trigger</div>
<div class="btn" style="left:698.5px;top:592.8px;width:180.7px;height:19.1px"></div>
<div class="t" style="left:704.2px;top:597.3px;font-size:12.2px">Discovery2 SN:210321A673C8</div>
<div class="btn" style="left:884.9px;top:592.8px;width:89.4px;height:19.1px"></div>
<div class="t" style="left:884.9px;width:89.4px;text-align:center;top:596.8px">Status: OK</div>
<div class="btn" style="left:980.2px;top:593px;width:23px;height:18px"></div>
<svg class="a" style="left:983px;top:593.5px" width="17" height="17"><defs><linearGradient id="gg983593" x1="0" y1="0" x2="1" y2="1"><stop offset="0" stop-color="#f2f4f5"/><stop offset="0.55" stop-color="#bfc6cb"/><stop offset="1" stop-color="#6f7a82"/></linearGradient></defs><polygon points="14.11,8.30 16.13,9.01 15.73,11.00 13.59,10.87 12.61,12.32 13.54,14.26 11.84,15.38 10.42,13.77 8.70,14.11 7.99,16.13 6.00,15.73 6.13,13.59 4.68,12.61 2.74,13.54 1.62,11.84 3.23,10.42 2.89,8.70 0.87,7.99 1.27,6.00 3.41,6.13 4.39,4.68 3.46,2.74 5.16,1.62 6.58,3.23 8.30,2.89 9.01,0.87 11.00,1.27 10.87,3.41 12.32,4.39 14.26,3.46 15.38,5.16 13.77,6.58" fill="url(#gg983593)" stroke="#8a949b" stroke-width="0.7" stroke-linejoin="round"/><circle cx="8.5" cy="8.5" r="2.72" fill="#47525b"/><circle cx="9.69" cy="8.33" r="2.21" fill="#dfe4e7"/></svg>
</body></html>
